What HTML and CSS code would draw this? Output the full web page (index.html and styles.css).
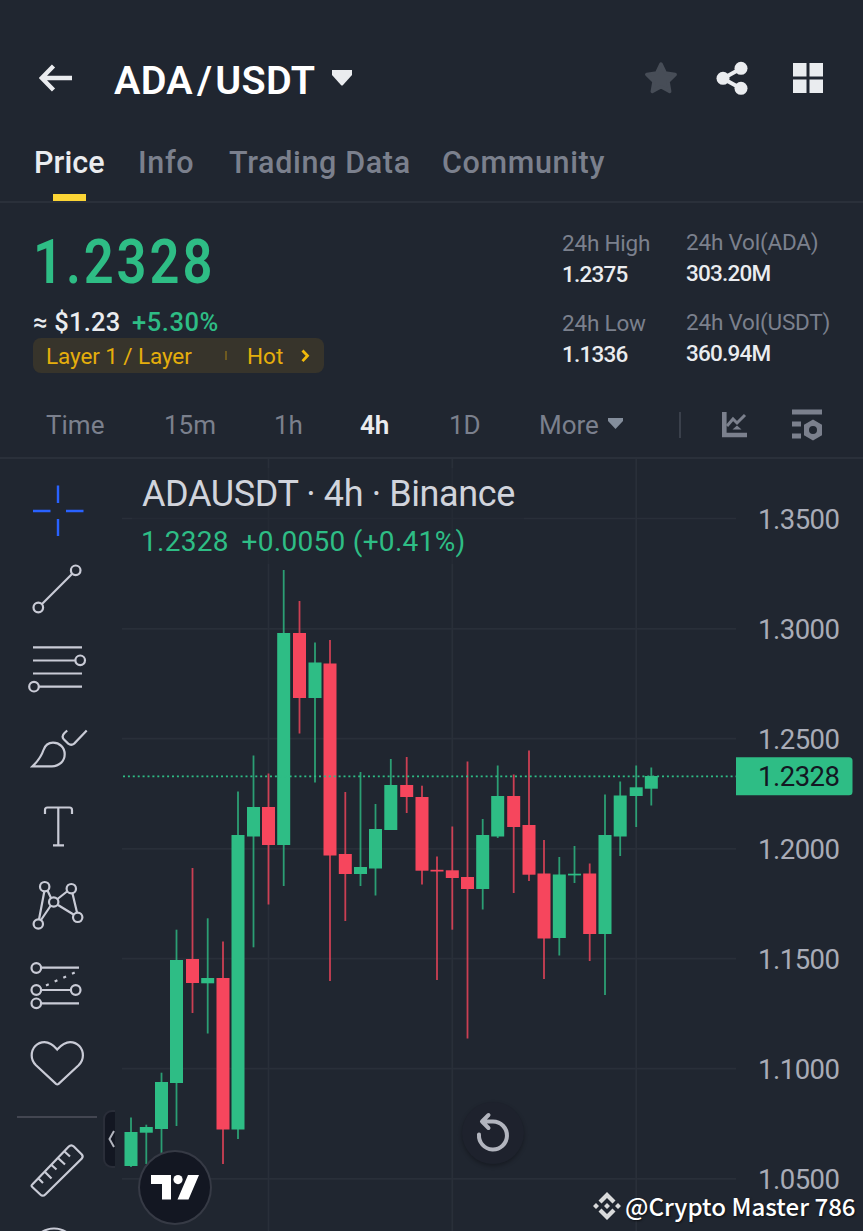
FILE: index.html
```html
<!DOCTYPE html>
<html lang="en">
<head>
    <meta charset="UTF-8">
    <meta name="viewport" content="width=device-width, initial-scale=1.0">
    <title>ADA/USDT</title>
    <link rel="stylesheet" href="styles.css">
</head>
<body>
    <!-- Top bar -->
    <header class="topbar">
        <svg class="back" width="34" height="28" viewBox="0 0 34 28"><path d="M14.5 2 2.8 14l11.7 12M3 14h30" fill="none" stroke="#eaecef" stroke-width="4.4"/></svg>
        <h1 class="pair">ADA<span>/</span>USDT</h1>
        <svg class="pair-caret" width="20" height="16" viewBox="0 0 20 16"><path d="M0 0h20v5L10.800 15.200q-.8.7-1.600 0L0 5z" fill="#eaecef"/></svg>
        <div class="actions">
            <svg width="34" height="34" viewBox="0 0 34 34"><path d="m17 3 4.300 9 9.900 1.500-7.200 7 1.700 10L17 25.800 8.300 30.500l1.700-10-7.200-7L12.700 12z" fill="#474d57" stroke="#474d57" stroke-width="3.500" stroke-linejoin="round"/></svg>
            <svg width="34" height="34" viewBox="0 0 34 34"><path d="m26 7.500L8 17.500l18 10" fill="none" stroke="#eaecef" stroke-width="4"/><g fill="#eaecef"><circle cx="26" cy="7.300" r="6.500"/><circle cx="8" cy="17.300" r="6.500"/><circle cx="26" cy="27.300" r="6.500"/></g></svg>
            <svg class="apps" width="30" height="30" viewBox="0 0 30 30"><path d="M0 0h13.500v13.500H0zM16.500 0H30v13.500H16.500zM0 16.500h13.500V30H0zM16.500 16.500H30V30H16.500z" fill="#eaecef"/></svg>
        </div>
    </header>

    <nav class="tabs">
        <a class="active">Price</a>
        <a>Info</a>
        <a>Trading Data</a>
        <a>Community</a>
    </nav>

    <!-- Price and 24h stats -->
    <section class="summary">
        <div class="quote">
            <div class="last">1.2328</div>
            <div class="fiat">≈ $1.23 <span>+5.30%</span></div>
            <div class="tag">
                <span class="tag-name">Layer 1 / Layer</span>
                <i class="tag-sep"></i>
                <span>Hot</span>
                <svg width="9" height="14" viewBox="0 0 9 14"><path d="m1.500 1.500 5 5.300-5 5.300" fill="none" stroke="#f0b90b" stroke-width="2.800"/></svg>
            </div>
        </div>
        <dl class="stats">
            <div class="stat"><dt>24h High</dt><dd>1.2375</dd></div>
            <div class="stat vol"><dt>24h Vol(ADA)</dt><dd>303.20M</dd></div>
            <div class="stat"><dt>24h Low</dt><dd>1.1336</dd></div>
            <div class="stat vol"><dt>24h Vol(USDT)</dt><dd>360.94M</dd></div>
        </dl>
    </section>

    <div class="intervals">
        <span>Time</span>
        <span>15m</span>
        <span>1h</span>
        <span class="active">4h</span>
        <span>1D</span>
        <span class="more">More <svg width="15" height="11" viewBox="0 0 15 11"><path d="M0 0h15v3L7.500 11 0 3z" fill="#848e9c"/></svg></span>
        <i class="bar"></i>
        <svg width="26" height="26" viewBox="0 0 26 26"><path d="M2.300 0v23H25" fill="none" stroke="#7b808d" stroke-width="4.600"/><path d="m5 14 6-7 4 4 8-8" fill="none" stroke="#7b808d" stroke-width="3"/><path d="m10.500 17.500 4.500-4 4.500 4z" fill="#7b808d"/></svg>
        <svg width="32" height="32" viewBox="0 0 32 32"><path d="M1 .5h30v5H1zM1 12.500h9v5H1zM1 24.500h9v5H1z" fill="#7b808d"/><path fill-rule="evenodd" d="m22 10.500 9 5.200v10.600l-9 5.200-9-5.200V15.700zM22 17a4 4 0 1 0 0 8 4 4 0 0 0 0-8z" fill="#7b808d"/></svg>
    </div>

    <!-- Chart -->
    <main class="chart">
        <aside class="tools">
            <svg viewBox="20 471 76 79"><path d="M58 485.500V503M58 519v17M33 511h17.500M66 511h17.500" stroke="#2962ff" stroke-width="2.400"/></svg>
            <svg viewBox="20 550 76 79"><path d="m42 604 30-30"/><circle cx="38.300" cy="607.500" r="4.800"/><circle cx="75.700" cy="570.300" r="4.800"/></svg>
            <svg viewBox="20 629 76 79"><path d="M33 647.300h49M33 660.500h42M33 673.500h49M39 686.700h43"/><circle cx="80.200" cy="660.300" r="4.800"/><circle cx="34" cy="686.700" r="4.800"/></svg>
            <svg viewBox="20 708 76 79"><path d="M32.500 766.300h19.500c7 0 12.700-5 12.700-12s-5.200-11.600-11.700-11.600c-5 0-8 3-9.500 7.300-2 6-5.500 11-11 16.300zM67.200 730.500l-2.700 2.500q-3.500 3.300-.5 6.600l4.200 4q3 2.300 6 0l12.500-13"/></svg>
            <svg viewBox="20 787 76 79"><path d="M45 814v-4q0-2.500 2.500-2.500h22q2.500 0 2.500 2.500v4M58.300 808v37M53 845.300h11"/></svg>
            <svg viewBox="20 866 76 79"><path d="m44.300 891.500-5.300 28M47.500 890.500l3.500 7.500M57.500 899l9.500-7.500M72.500 893.500l4.500 19M58 905l15.500 9.500M50.500 906l-9.500 14"/><circle cx="44.700" cy="886.700" r="4.700"/><circle cx="71.300" cy="888.700" r="4.700"/><circle cx="53.700" cy="902" r="4.700"/><circle cx="38.300" cy="924" r="4.700"/><circle cx="77.700" cy="917.300" r="4.700"/></svg>
            <svg viewBox="20 945 76 79"><path d="M41 967.700h38M41 990h30M41 1003.300h38"/><path d="m46 985.500 31-14" stroke-dasharray="3 6.500"/><circle cx="36.300" cy="968" r="4.800"/><circle cx="36.300" cy="990" r="4.800"/><circle cx="36.300" cy="1003.300" r="4.800"/><circle cx="75.700" cy="990" r="4.800"/></svg>
            <svg viewBox="20 1024 76 79"><path d="M57.200 1049.500c-3.500-4-7.500-7.300-12.700-7.300-7.500 0-12.800 6-12.800 13.300 0 4 1.500 7 4.300 9.800l20 18.500q1.300 1 2.600 0l20-18.500c2.800-2.800 4.300-5.800 4.300-9.800 0-7.300-5.300-13.300-12.800-13.300-5.200 0-9.200 3.300-12.900 7.300z"/></svg>
            <hr>
            <svg viewBox="20 1131 76 79"><path d="m32.300 1184.500 36.500-38q2.500-2.500 5 0l8 8q1.700 2 0 4l-36.500 36q-2.500 2.500-5 0l-8-7.500q-1.500-1.300 0-2.500zM38 1178l5 5M44.500 1171.500l7 7M51.500 1165l5 4.500M58 1158l7 6.500M64.500 1151.500l5.500 5"/></svg>
            <svg class="cut" viewBox="20 1210 76 21"><circle cx="54" cy="1251" r="22.500"/></svg>
        </aside>

        <div class="plot">
            <svg width="741" height="772" viewBox="122 459 741 772">
                <g class="grid">
                    <path d="M122 518.500h614M122 628.800h614M122 738.700h614M122 848.800h614M122 958.600h614M122 1068.700h614M122 1178.800h614"/>
                    <path d="M268.500 459v772M452.300 459v772M636.200 459v772"/>
                </g>
                <rect class="legend-bg" x="132" y="468" width="392" height="96"/>
                <g id="candles"></g>
                <path class="last-line" d="M123 776.300h613"/>
                <text class="symbol" x="142" y="505.500">ADAUSDT · 4h · Binance</text>
                <text class="change" x="141" y="551">1.2328</text>
                <text class="change" x="241.500" y="551">+0.0050 (+0.41%)</text>
                <g class="axis">
                    <text x="758" y="529">1.3500</text>
                    <text x="758" y="639">1.3000</text>
                    <text x="758" y="749">1.2500</text>
                    <text x="758" y="859">1.2000</text>
                    <text x="758" y="969">1.1500</text>
                    <text x="758" y="1079">1.1000</text>
                    <text x="758" y="1189">1.0500</text>
                </g>
                <path d="M736 757.300h113q3.500 0 3.500 3.500v31q0 3.500-3.500 3.500H736z" fill="#2ebd85"/>
                <text class="last-label" x="758" y="786">1.2328</text>
            </svg>
            <div class="collapse"><svg width="8" height="18" viewBox="0 0 8 18"><path d="M7 1 2.500 9 7 17" fill="none" stroke="#b2b5be" stroke-width="2"/></svg></div>
            <div class="tv">
                <svg width="48" height="25" viewBox="0 0 48 25"><path d="M0 0h20v24.500h-9V9H0zM37 0h11L37.500 24.500H26.500z" fill="#fff"/><circle cx="27" cy="4.600" r="4.600" fill="#fff"/></svg>
            </div>
            <div class="reset">
                <svg width="34" height="40" viewBox="0 0 34 40"><path d="M3 22.500a14 14 0 1 0 14-13H7M12.500 3 6 9.500l6.500 6.500" fill="none" stroke="#b2b5be" stroke-width="4" stroke-linecap="round" stroke-linejoin="round"/></svg>
            </div>
            <div class="watermark">
                <svg width="28" height="28" viewBox="0 0 28 28" fill="#d9dadb"><path d="m14 0 8.500 8.500-3 3L14 6l-5.500 5.500-3-3zM14 28l8.500-8.500-3-3L14 22l-5.500-5.500-3 3zM3 11l3 3-3 3-3-3zM25 11l3 3-3 3-3-3zM14 11l3 3-3 3-3-3z"/></svg>
                <span>@Crypto Master 786</span>
            </div>
        </div>
    </main>

    <script src="chart.js"></script>
</body>
</html>
```
FILE: styles.css
```css
:root {
    --bg: #202630;
    --line: #2a303a;
    --text: #eaecef;
    --muted: #7b808d;
    --green: #2ebd85;
    --red: #f6465d;
    --yellow: #fcd535;
}

* {
    box-sizing: border-box;
}

body {
    width: 863px;
    height: 1231px;
    margin: 0;
    overflow: hidden;
    display: flex;
    flex-direction: column;
    background-color: var(--bg);
    color: var(--text);
    font-family: Roboto, "Liberation Sans", sans-serif;
}

svg {
    display: block;
    flex-shrink: 0;
}

/* Top bar */
.topbar {
    display: flex;
    align-items: center;
    height: 76px;
    margin-top: 40px;
    padding: 0 40px 0 39px;
}

.pair {
    width: 203px;
    margin: 4px 0 0 41px;
    font-size: 39.5px;
    font-weight: 600;
    letter-spacing: 0.3px;
    color: #fff;
    white-space: nowrap;
}

.pair span {
    margin: 0 3px 0 4px;
}

.pair-caret {
    margin-left: 15px;
}

.actions {
    display: flex;
    align-items: center;
    margin-left: auto;
    gap: 37px;
}

.apps {
    margin-left: 7px;
}

/* Tabs */
.tabs {
    display: grid;
    grid-template-columns: 104px 91px 213px auto;
    grid-template-rows: 85px;
    height: 87px;
    padding: 0 34px;
    border-bottom: 2px solid var(--line);
    font-size: 30.5px;
    font-weight: 500;
    letter-spacing: 0.65px;
    line-height: 94px;
    color: var(--muted);
    white-space: nowrap;
}

.tabs .active {
    position: relative;
    letter-spacing: 0.1px;
    color: var(--text);
}

.tabs .active::after {
    content: "";
    position: absolute;
    left: 19px;
    bottom: 0;
    width: 33px;
    height: 7px;
    background-color: var(--yellow);
}

/* Summary */
.summary {
    display: flex;
    justify-content: space-between;
    height: 189px;
    padding: 25px 20px 0 33px;
}

.last {
    height: 69px;
    font-size: 61px;
    font-weight: 600;
    line-height: 69px;
    letter-spacing: 3.4px;
    color: var(--green);
    transform: scaleX(0.86);
    transform-origin: left;
}

.fiat {
    height: 41px;
    font-size: 25.5px;
    font-weight: 500;
    line-height: 50px;
    letter-spacing: 0.2px;
}

.fiat span {
    margin-left: 5px;
    letter-spacing: 0.6px;
    color: var(--green);
}

.tag {
    display: flex;
    align-items: center;
    width: 291px;
    height: 35px;
    padding-left: 13px;
    border-radius: 8px;
    background-color: #37342b;
    color: #e5ae0c;
    font-size: 22.5px;
}

.tag-name {
    width: 179px;
    letter-spacing: -0.1px;
}

.tag-sep {
    width: 2px;
    height: 9px;
    margin-right: 20px;
    background-color: #6e5a20;
}

.tag svg {
    margin-left: auto;
    margin-right: 14px;
}

.stats {
    display: grid;
    grid-template-columns: 124px 154px;
    grid-auto-rows: 80px;
    margin: 0;
    width: 281px;
}

.stat dt,
.stat dd {
    margin: 0;
    font-size: 22.5px;
    line-height: 31px;
    white-space: nowrap;
}

.stat dt {
    letter-spacing: -0.2px;
    color: var(--muted);
}

.stat dd {
    font-weight: 500;
    letter-spacing: -0.8px;
}

.vol {
    margin-top: -1px;
}

/* Intervals */
.intervals {
    display: grid;
    grid-template-columns: 118px 110px 86px 89px 90px 140px 43px 69px 32px;
    align-items: center;
    height: 67px;
    padding-left: 46px;
    border-bottom: 2px solid var(--line);
    font-size: 26px;
    color: var(--muted);
}

.intervals .active {
    color: var(--text);
    font-weight: 600;
}

.more {
    display: flex;
    align-items: center;
    gap: 9px;
}

.more svg {
    margin-bottom: 3px;
}

.bar {
    width: 2px;
    height: 26px;
    background-color: #3a404b;
}

/* Chart */
.chart {
    display: flex;
    flex: 1;
}

.tools {
    width: 122px;
    padding-top: 12px;
}

.tools svg {
    width: 76px;
    height: 79px;
    margin-left: 20px;
    fill: none;
    stroke: #c9cbd6;
    stroke-width: 2.2;
}

.tools .cut {
    height: 21px;
}

.tools hr {
    width: 80px;
    height: 2px;
    margin: 13px 0 13px 17px;
    border: 0;
    background-color: #434651;
}

.plot {
    position: relative;
}

.grid {
    stroke: #292f39;
    stroke-width: 1.7;
}

.legend-bg {
    fill: var(--bg);
    opacity: 0.5;
}

.last-line {
    stroke: var(--green);
    stroke-width: 1.7;
    stroke-dasharray: 2 2.9;
}

.up {
    fill: var(--green);
}

.down {
    fill: var(--red);
}

.wick {
    opacity: 0.8;
}

.symbol {
    font-size: 36px;
    letter-spacing: -0.4px;
    fill: #d1d4dc;
}

.change {
    font-size: 28px;
    letter-spacing: 0.3px;
    fill: var(--green);
}

.axis text {
    font-size: 27.5px;
    letter-spacing: -0.5px;
    fill: #a9acb7;
}

.last-label {
    font-size: 27.5px;
    letter-spacing: -0.5px;
    fill: #131722;
}

.collapse {
    position: absolute;
    left: -19px;
    top: 651px;
    width: 12px;
    height: 58px;
    padding: 18px 0 0 2px;
    border: 2px solid #2a2e39;
    border-right: 0;
    border-radius: 9px 0 0 9px;
    background-color: #131722;
}

.tv {
    position: absolute;
    left: 16px;
    top: 691px;
    display: flex;
    align-items: center;
    justify-content: center;
    width: 74px;
    height: 75px;
    border: 2px solid #363a45;
    border-radius: 50%;
    background-color: #131722;
}

.reset {
    position: absolute;
    left: 340px;
    top: 643px;
    display: flex;
    align-items: center;
    justify-content: center;
    width: 62px;
    height: 62px;
    border-radius: 50%;
    background-color: #1e222d;
    box-shadow: 0 2px 4px rgba(0, 0, 0, 0.3);
}

.reset svg {
    margin-bottom: 3px;
}

.watermark {
    position: absolute;
    left: 471px;
    top: 733px;
    display: flex;
    align-items: center;
    gap: 4px;
    font-family: "Noto Sans CJK SC", sans-serif;
    font-size: 24.1px;
    font-weight: 500;
    line-height: 28px;
    color: #fff;
    white-space: nowrap;
    text-shadow: 1px 1px 2px rgba(0, 0, 0, 0.6);
}
```
FILE: chart.js
```js
// x centre, body top, body bottom, wick top, wick bottom, up/down
const candles = [
    [131, 1132, 1166, 1117.5, 1167, 'up'],
    [146.3, 1127, 1132.7, 1124.7, 1164, 'up'],
    [161.5, 1082, 1129, 1072.7, 1154, 'up'],
    [176.5, 960, 1083, 929.7, 1126, 'up'],
    [192.5, 959, 983, 868, 1013, 'down'],
    [207.7, 978, 983.3, 918.3, 1033.5, 'up'],
    [223, 978, 1129.5, 941.5, 1164, 'down'],
    [238, 835, 1129.5, 791.5, 1139, 'up'],
    [253.5, 807, 836.5, 755.5, 947.3, 'up'],
    [268.5, 807, 845, 773.5, 904.5, 'down'],
    [283.7, 633, 845, 570, 886, 'up'],
    [299.5, 633, 698, 601, 733.5, 'down'],
    [315, 662.5, 698, 642.5, 782.5, 'up'],
    [330, 663.5, 855.5, 640, 981, 'down'],
    [345.3, 854, 874, 792, 921, 'down'],
    [360.5, 867, 874, 772, 886, 'up'],
    [375.5, 829, 868.5, 804, 895.5, 'up'],
    [390.8, 785, 830, 759, 830, 'up'],
    [406.7, 785, 797, 757, 813, 'down'],
    [422, 797, 870.7, 785.7, 884.5, 'down'],
    [437, 869.8, 871.5, 856.5, 980, 'down'],
    [452.3, 870.3, 878, 826.5, 929.7, 'down'],
    [467.5, 877, 889, 761.5, 1038.5, 'down'],
    [482.7, 835, 889, 819, 909.5, 'up'],
    [497.7, 796, 836.5, 765.5, 838, 'up'],
    [513.7, 796, 827, 774.5, 893, 'down'],
    [529, 825, 874.7, 750.5, 881, 'down'],
    [544, 873.5, 938.5, 840, 979, 'down'],
    [559.3, 874.5, 938, 857, 955.5, 'up'],
    [574.5, 873.7, 875.4, 846, 883, 'up'],
    [589.7, 873.5, 934, 863.5, 961, 'down'],
    [605, 835, 934, 794.5, 995, 'up'],
    [620.2, 795.5, 836.5, 781.5, 856, 'up'],
    [636.2, 787.3, 796, 765.5, 827, 'up'],
    [651.3, 776, 788.7, 767.5, 805.5, 'up']
];

document.getElementById('candles').innerHTML = candles.map(([x, top, bottom, high, low, dir]) => `
    <rect class="wick ${dir}" x="${x - 0.9}" y="${high}" width="1.8" height="${low - high}"/>
    <rect class="${dir}" x="${x - 6.5}" y="${top}" width="13" height="${bottom - top}"/>
`).join('');
```
